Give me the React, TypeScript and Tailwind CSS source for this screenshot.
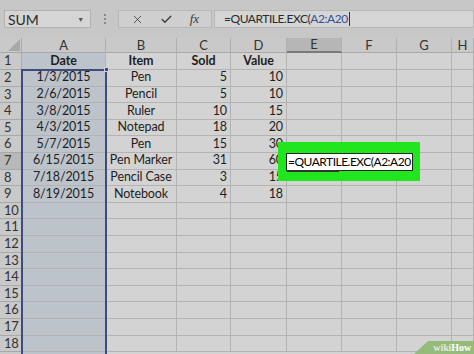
import { X, Check } from "lucide-react";

// Spreadsheet with a formula being typed into E7 (QUARTILE.EXC demo)

const COLS = ["A", "B", "C", "D", "E", "F", "G", "H"];
const WIDTHS = ["w-[84px]", "w-[71px]", "w-[54px]", "w-[56px]", "w-[55px]", "w-[55px]", "w-[55px]", "flex-1"];

const DATA: [string, string, string, string][] = [
  ["1/3/2015", "Pen", "5", "10"],
  ["2/6/2015", "Pencil", "5", "10"],
  ["3/8/2015", "Ruler", "10", "15"],
  ["4/3/2015", "Notepad", "18", "20"],
  ["5/7/2015", "Pen", "15", "30"],
  ["6/15/2015", "Pen Marker", "31", "60"],
  ["7/18/2015", "Pencil Case", "3", "15"],
  ["8/19/2015", "Notebook", "4", "18"],
];

const EMPTY_ROWS = [10, 11, 12, 13, 14, 15, 16, 17, 18];

function Cell({
  col,
  children,
  align = "center",
  bold = false,
}: {
  col: number;
  children?: React.ReactNode;
  align?: "center" | "right";
  bold?: boolean;
}) {
  const selected = col === 0;
  return (
    <div
      className={`${WIDTHS[col]} flex h-full shrink-0 items-center overflow-visible whitespace-nowrap border-b border-r border-[#b3b3b3] px-[3px] ${
        align === "right" ? "justify-end" : "justify-center"
      } ${bold ? "font-bold" : ""} ${selected ? "bg-[#bdc3cb]" : ""}`}
    >
      {children}
    </div>
  );
}

function RowHead({ n, active = false }: { n: number; active?: boolean }) {
  return (
    <div
      className={`flex h-full w-[22px] shrink-0 items-center border-b border-r border-[#a9a9a9] pl-[4px] text-[13px] tracking-[-0.3px] text-[#333] ${
        active ? "bg-[#b8b8b8]" : "bg-[#c9c9c9]"
      }`}
    >
      {n}
    </div>
  );
}

export default function App() {
  return (
    <div
      className="relative h-[354px] w-[474px] overflow-hidden bg-[#d3d3d3] text-[12.5px] tracking-[-0.1px] text-[#1e1e1e]"
      style={{ fontFamily: "Lato, 'Open Sans', sans-serif" }}
    >
      {/* formula bar */}
      <div className="flex h-[38px] items-center bg-[#c7c7c7] pl-[4px]">
        <div className="flex h-[18px] w-[87px] items-center justify-between border border-[#b2b2b2] bg-[#d5d5d5] pl-[3px] pr-[6px] text-[14px] text-[#2a2a2a]">
          <span>SUM</span>
          <span className="text-[7px] text-[#555]">▼</span>
        </div>
        <div className="flex w-[27px] flex-col items-center gap-[2px]">
          <span className="h-[2px] w-[2px] bg-[#8a8a8a]" />
          <span className="h-[2px] w-[2px] bg-[#8a8a8a]" />
          <span className="h-[2px] w-[2px] bg-[#8a8a8a]" />
        </div>
        <div className="flex h-[18px] w-[94px] items-center justify-around border border-[#b8b8b8] bg-[#cfcfcf] px-[4px] text-[#3a3a3a]">
          <X className="h-[13px] w-[13px]" strokeWidth={1.5} />
          <Check className="h-[13px] w-[13px]" strokeWidth={2.5} />
          <span className="text-[13px] italic" style={{ fontFamily: "'Liberation Serif', serif" }}>
            fx
          </span>
        </div>
        <div className="ml-[2px] flex h-[18px] flex-1 items-center border border-[#b8b8b8] bg-[#d5d5d5] pl-[9px] text-[12px] tracking-[-0.45px] text-[#2a2a2a]">
          =QUARTILE.EXC(<span className="text-[#3b4f96]">A2:A20</span>
          <span className="ml-[1px] h-[14px] w-px bg-[#333]" />
        </div>
      </div>

      {/* column headers */}
      <div className="flex h-[15px] bg-[#c9c9c9] text-[13px] text-[#333]">
        <div className="relative w-[22px] shrink-0 border-b border-r border-[#a9a9a9]">
          <div className="absolute bottom-[1px] right-[1px] h-0 w-0 border-b-[12px] border-l-[12px] border-b-[#a8a8a8] border-l-transparent" />
        </div>
        {COLS.map((c, i) => (
          <div
            key={c}
            className={`${WIDTHS[i]} flex shrink-0 items-center justify-center border-r border-[#b0b0b0] leading-none ${
              c === "E" ? "border-b-2 border-b-[#7a7a7a] bg-[#b6b6b6]" : "border-b border-b-[#a9a9a9]"
            }`}
          >
            {c}
          </div>
        ))}
      </div>

      {/* header row */}
      <div className="flex h-[17px]">
        <RowHead n={1} />
        <Cell col={0} bold>Date</Cell>
        <Cell col={1} bold>Item</Cell>
        <Cell col={2} bold>Sold</Cell>
        <Cell col={3} bold>Value</Cell>
        <Cell col={4} />
        <Cell col={5} />
        <Cell col={6} />
        <Cell col={7} />
      </div>

      {/* data + selection of column A */}
      <div className="relative">
        {DATA.map((r, i) => (
          <div key={i} className="flex h-[16.6px]">
            <RowHead n={i + 2} active={i + 2 === 7} />
            <Cell col={0}>{r[0]}</Cell>
            <Cell col={1}>{r[1]}</Cell>
            <Cell col={2} align="right">{r[2]}</Cell>
            <Cell col={3} align="right">{r[3]}</Cell>
            <Cell col={4} />
            <Cell col={5} />
            <Cell col={6} />
            <Cell col={7} />
          </div>
        ))}
        {EMPTY_ROWS.map((n) => (
          <div key={n} className="flex h-[16.6px]">
            <RowHead n={n} />
            {COLS.map((c, i) => (
              <Cell key={c} col={i} />
            ))}
          </div>
        ))}
        <div className="flex h-[16.6px]">
          <div className="h-full w-[22px] shrink-0 border-r border-[#a9a9a9] bg-[#c9c9c9]" />
          <div className="h-full w-[84px] shrink-0 bg-[#bdc3cb]" />
        </div>
        {/* selection outline */}
        <div className="pointer-events-none absolute left-[21px] top-[-1px] h-[400px] w-[86px] border-x-2 border-t-2 border-[#3d4c7c]" />
        <div className="absolute left-[104px] top-[-3px] h-[5px] w-[5px] border border-[#d3d3d3] bg-[#3d4c7c]" />
      </div>

      {/* in-cell editor highlight */}
      <div className="absolute left-[278px] top-[142px] flex h-[39px] items-center bg-[#21e51d] pl-[8px] pr-[7px]">
        <div className="relative flex h-[18px] items-center border border-[#222] bg-white pl-[1px] pr-[1px] text-[12px] tracking-[-0.5px] text-black">
          =QUARTILE.EXC(A2:A20
          <span className="absolute bottom-[-2px] left-0 h-[2px] w-[52px] bg-[#333]" />
        </div>
      </div>

      {/* watermark */}
      <div
        className="absolute bottom-0 right-0 flex h-[13px] w-[60px] items-center justify-end bg-[#94bb7a] pr-[3px] text-[10px] font-bold leading-none text-white"
        style={{ fontFamily: "'Liberation Serif', serif", clipPath: "polygon(14px 0, 100% 0, 100% 100%, 0 100%)" }}
      >
        <span className="text-[#e3e8df]">wiki</span>How
      </div>
    </div>
  );
}
